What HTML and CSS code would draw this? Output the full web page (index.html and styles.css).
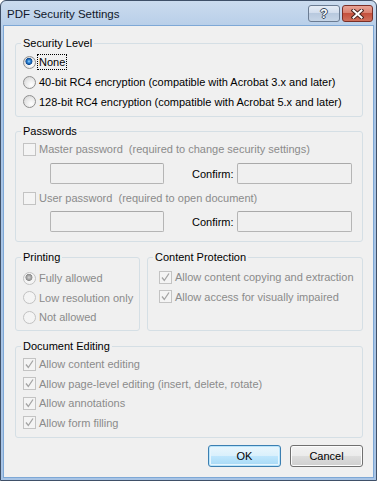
FILE: index.html
```html
<!DOCTYPE html>
<html>
<head>
<meta charset="utf-8">
<link rel="stylesheet" href="styles.css">
</head>
<body>
<div class="window">
  <div class="titlebar">
    <span class="title">PDF Security Settings</span>
    <div class="caption-btns">
      <div class="cap help"><span class="q">?</span></div>
      <div class="cap close">
        <svg width="13" height="10" viewBox="0 0 13 10"><path d="M2.5 1.5 L10.5 8.5 M10.5 1.5 L2.5 8.5" stroke="#4a2420" stroke-width="4" stroke-linecap="square" fill="none"/><path d="M2.5 1.5 L10.5 8.5 M10.5 1.5 L2.5 8.5" stroke="#fff" stroke-width="2" stroke-linecap="square" fill="none"/></svg>
      </div>
    </div>
  </div>
  <div class="client">
    <fieldset class="group">
      <legend>Security Level</legend>
      <div class="body sec">
        <div class="row"><span class="radio checked"></span><span class="lbl focus">None</span></div>
        <div class="row"><span class="radio"></span><span class="lbl">40-bit RC4 encryption (compatible with Acrobat 3.x and later)</span></div>
        <div class="row short"><span class="radio"></span><span class="lbl">128-bit RC4 encryption (compatible with Acrobat 5.x and later)</span></div>
      </div>
    </fieldset>

    <fieldset class="group pw">
      <legend>Passwords</legend>
      <div class="body pwbody">
        <div class="row"><span class="check"></span><span class="lbl dis pre">Master password  (required to change security settings)</span></div>
        <div class="tbrow"><span class="tb"></span><span class="clabel">Confirm:</span><span class="tb wide"></span></div>
        <div class="row r2"><span class="check"></span><span class="lbl dis pre">User password  (required to open document)</span></div>
        <div class="tbrow t2"><span class="tb"></span><span class="clabel">Confirm:</span><span class="tb wide"></span></div>
      </div>
    </fieldset>

    <div class="pair">
      <fieldset class="group">
        <legend>Printing</legend>
        <div class="body printbody">
          <div class="row"><span class="radio dis checked"></span><span class="lbl dis">Fully allowed</span></div>
          <div class="row short"><span class="radio dis"></span><span class="lbl dis">Low resolution only</span></div>
          <div class="row"><span class="radio dis"></span><span class="lbl dis">Not allowed</span></div>
        </div>
      </fieldset>
      <fieldset class="group">
        <legend>Content Protection</legend>
        <div class="body cpbody">
          <div class="row"><span class="check"><svg width="11" height="11" viewBox="0 0 11 11"><path d="M2 5.5 L4.3 8.5 L9 1.5" stroke="#a4a4a4" stroke-width="1.3" fill="none"/></svg></span><span class="lbl dis">Allow content copying and extraction</span></div>
          <div class="row short"><span class="check"><svg width="11" height="11" viewBox="0 0 11 11"><path d="M2 5.5 L4.3 8.5 L9 1.5" stroke="#a4a4a4" stroke-width="1.3" fill="none"/></svg></span><span class="lbl dis">Allow access for visually impaired</span></div>
        </div>
      </fieldset>
    </div>

    <fieldset class="group edit">
      <legend>Document Editing</legend>
      <div class="body editbody">
        <div class="row"><span class="check"><svg width="11" height="11" viewBox="0 0 11 11"><path d="M2 5.5 L4.3 8.5 L9 1.5" stroke="#a4a4a4" stroke-width="1.3" fill="none"/></svg></span><span class="lbl dis">Allow content editing</span></div>
        <div class="row short"><span class="check"><svg width="11" height="11" viewBox="0 0 11 11"><path d="M2 5.5 L4.3 8.5 L9 1.5" stroke="#a4a4a4" stroke-width="1.3" fill="none"/></svg></span><span class="lbl dis">Allow page-level editing (insert, delete, rotate)</span></div>
        <div class="row"><span class="check"><svg width="11" height="11" viewBox="0 0 11 11"><path d="M2 5.5 L4.3 8.5 L9 1.5" stroke="#a4a4a4" stroke-width="1.3" fill="none"/></svg></span><span class="lbl dis">Allow annotations</span></div>
        <div class="row short"><span class="check"><svg width="11" height="11" viewBox="0 0 11 11"><path d="M2 5.5 L4.3 8.5 L9 1.5" stroke="#a4a4a4" stroke-width="1.3" fill="none"/></svg></span><span class="lbl dis">Allow form filling</span></div>
      </div>
    </fieldset>

    <div class="buttons">
      <div class="btn default">OK</div>
      <div class="btn">Cancel</div>
    </div>
  </div>
</div>
</body>
</html>
```
FILE: styles.css
```css
html, body {
  margin: 0;
  padding: 0;
  background: #ffffff;
}
body {
  font-family: "Liberation Sans", Arial, sans-serif;
  font-size: 11px;
  color: #000;
}
.window {
  width: 377px;
  height: 481px;
  box-sizing: border-box;
  border: 1px solid #3f5068;
  border-radius: 6px 6px 0 0;
  background: linear-gradient(#cbdbee, #b9cfe9 24px, #a8c4e5 60px, #a8c4e5);
  padding: 0 2px 2px;
  display: flex;
  flex-direction: column;
}
.titlebar {
  height: 24px;
  display: flex;
  align-items: flex-start;
  padding-right: 1px;
}
.title {
  flex: 1;
  padding: 6px 0 0 4px;
  font-size: 11.5px;
  line-height: 14px;
  color: #10182a;
}
.caption-btns {
  display: flex;
  gap: 2px;
  margin-top: 4px;
}
.cap {
  height: 17px;
  box-sizing: border-box;
  border: 1px solid #6b7c93;
  border-radius: 3px;
  display: flex;
  align-items: center;
  justify-content: center;
}
.help {
  width: 32px;
  background: linear-gradient(#e6edf6, #d2dded 45%, #b8c9de 50%, #c6d5e7);
}
.q {
  font-weight: bold;
  font-size: 12px;
  line-height: 12px;
  color: #fff;
  text-shadow: 1px 0 0 #37465a, -1px 0 0 #37465a, 0 1px 0 #37465a, 0 -1px 0 #37465a;
}
.close {
  width: 31px;
  border-color: #7a2f27;
  background: linear-gradient(#e9a395, #d98170 45%, #c4503d 50%, #d0705c);
}
.close svg { display: block; }
.client {
  flex: 1;
  background: #f0f0f0;
  border: 1px solid #7ea8d6;
  padding: 10px 10px 0 11px;
  display: flex;
  flex-direction: column;
}
.group {
  margin: 0;
  padding: 0;
  border: 1px solid #d5dfe5;
  border-radius: 3px;
  min-width: 0;
}
.group legend {
  margin-left: 5px;
  padding: 0 2px;
  line-height: 15px;
  height: 15px;
}
.body {
  display: flex;
  flex-direction: column;
  padding-left: 7px;
}
.row {
  height: 20px;
  display: flex;
  align-items: center;
  gap: 3px;
  white-space: nowrap;
}
.row.short { height: 19px; }
.lbl { line-height: 14px; }
.lbl.dis { color: #8b8b8b; }
.pre { white-space: pre; }
.focus {
  outline: 1px dotted #000;
  outline-offset: 0;
  padding: 0 1px;
  margin-left: -1px;
}
.radio {
  flex: none;
  width: 13px;
  height: 13px;
  box-sizing: border-box;
  border-radius: 50%;
  border: 1px solid #8f8f8f;
  background: radial-gradient(circle at 65% 70%, #ffffff, #e9e9e9 50%, #cfcfcf);
}
.radio.checked {
  background:
    radial-gradient(circle at 45% 40%, #9ad6ff 0, #2f86d6 1.5px, #0d4a94 3.2px, rgba(13,74,148,0) 3.8px),
    radial-gradient(circle at 65% 70%, #ffffff, #e9e9e9 50%, #cfcfcf);
}
.radio.dis {
  border-color: #c2c2c2;
  background: #f4f4f4;
}
.radio.dis.checked {
  background:
    radial-gradient(circle at 45% 40%, #d8d8d8 0, #a9a9a9 1.8px, #8c8c8c 3.2px, rgba(140,140,140,0) 3.8px),
    #f4f4f4;
}
.check {
  flex: none;
  width: 13px;
  height: 13px;
  box-sizing: border-box;
  border: 1px solid #c3c3c3;
  background: #f4f4f4;
  display: flex;
  align-items: center;
  justify-content: center;
}
.check svg { display: block; }

.sec { padding-top: 1px; padding-bottom: 5px; }

.pw { margin-top: 7px; }
.pwbody { padding-bottom: 9px; }
.tbrow {
  display: flex;
  align-items: center;
  margin-top: 4px;
  padding-left: 27px;
}
.tbrow.t2 { margin-top: 3px; }
.row.r2 { margin-top: 4px; }
.tb {
  width: 114px;
  height: 21px;
  box-sizing: border-box;
  border: 1px solid #b5b5b5;
  border-top-color: #a9a9a9;
  border-radius: 2px;
  background: #f0f0f0;
}
.tb.wide { width: 115px; }
.clabel {
  margin-left: 28px;
  width: 45px;
  color: #000;
}

.pair {
  margin-top: 8px;
  display: grid;
  grid-template-columns: 125px 1fr;
  column-gap: 7px;
}
.printbody { padding-top: 3px; padding-bottom: 3px; }
.cpbody { padding-top: 2px; padding-left: 11px; }

.edit { margin-top: 8px; }
.editbody { padding-bottom: 5px; }

.buttons {
  margin-top: 7px;
  display: flex;
  justify-content: flex-end;
  gap: 9px;
}
.btn {
  width: 73px;
  height: 22px;
  box-sizing: border-box;
  border: 1px solid #707070;
  border-radius: 3px;
  background: linear-gradient(#f2f2f2, #ebebeb 50%, #dddddd 51%, #cfcfcf);
  box-shadow: inset 0 0 0 1px #fcfcfc;
  display: flex;
  align-items: center;
  justify-content: center;
  line-height: 14px;
}
.btn.default {
  border-color: #3c7fb1;
  background: linear-gradient(#eaf6fd, #d9f0fc 50%, #bee6fd 51%, #a7d9f5);
  box-shadow: inset 0 0 0 1px #b9e4fb, inset 0 0 0 2px #e6f5fd;
}
```
